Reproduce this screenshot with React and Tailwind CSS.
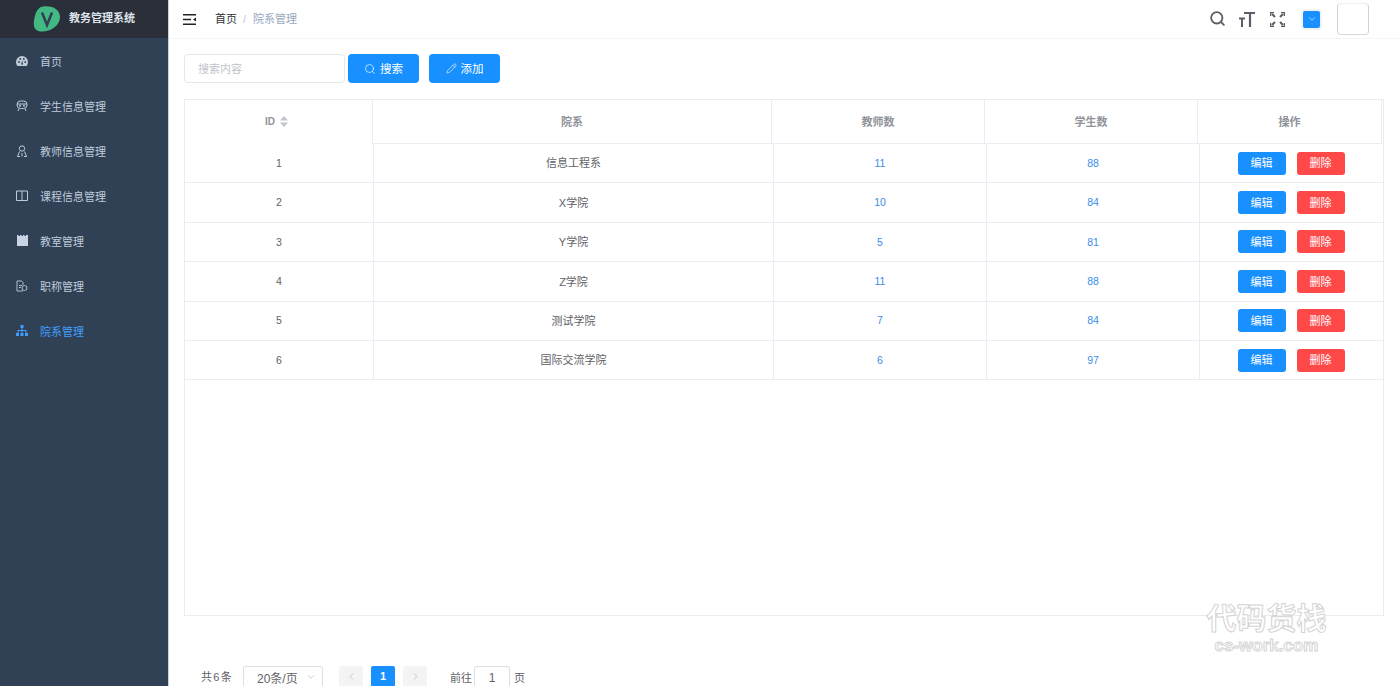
import React from 'react';
import { Search, Pencil, ChevronDown, ChevronLeft, ChevronRight } from 'lucide-react';

const FONT = 'font-["Liberation_Sans","Noto_Sans_CJK_SC",sans-serif]';

const GaugeIcon = () => (
  <svg width="12" height="10" viewBox="0 0 12 10" fill="currentColor">
    <path d="M6 0a6 6 0 0 0-6 6c0 1.500.5 2.800 1.300 4h9.400A6.700 6.700 0 0 0 12 6a6 6 0 0 0-6-6z" />
    <circle cx="3" cy="6" r=".9" fill="#304156" />
    <circle cx="4.200" cy="3" r=".9" fill="#304156" />
    <circle cx="7.800" cy="3" r=".9" fill="#304156" />
    <circle cx="9.300" cy="6" r=".9" fill="#304156" />
    <path d="M5 8.500 6.300 4.500 7 8.500z" fill="#304156" />
  </svg>
);

const StudentIcon = () => (
  <svg width="12" height="12" viewBox="0 0 12 12" fill="none" stroke="currentColor" strokeWidth="1">
    <rect x="1" y="1" width="10" height="7.500" rx="3.500" />
    <path d="M1 4h10" />
    <circle cx="4" cy="5.800" r=".6" fill="currentColor" />
    <circle cx="8" cy="5.800" r=".6" fill="currentColor" />
    <path d="M3 8.500 2 11M9 8.500l1 2.500" />
  </svg>
);

const TeacherIcon = () => (
  <svg width="12" height="12" viewBox="0 0 12 12" fill="none" stroke="currentColor" strokeWidth="1">
    <circle cx="6" cy="3.500" r="2.700" />
    <path d="M3.500 6.500 1.500 11.500h2.500M8.500 6.500l2 5H8M6 8v3.500" />
  </svg>
);

const BookIcon = () => (
  <svg width="12" height="12" viewBox="0 0 12 12" fill="none" stroke="currentColor" strokeWidth="1">
    <path d="M.5 1h11v9.500H.5zM6 1v9.500" />
  </svg>
);

const RoomIcon = () => (
  <svg width="11" height="11" viewBox="0 0 11 11" fill="#c8d4e3">
    <path d="M0 0h1.500v1H3V0h1.500v1H6V0h1.500v1H9V0h2v11H0z" />
  </svg>
);

const TitleIcon = () => (
  <svg width="12" height="12" viewBox="0 0 12 12" fill="none" stroke="currentColor" strokeWidth="0.9">
    <path d="M7 11H1V1h4.500L7 2.500V5" />
    <path d="M3 5.500h3M3 7.500h2" />
    <circle cx="8.500" cy="8" r="2.500" />
  </svg>
);

const TreeIcon = () => (
  <svg width="12" height="11" viewBox="0 0 12 11" fill="currentColor">
    <path d="M4.500 0h3v3h-3zM0 8h3v3H0zM4.500 8h3v3h-3zM9 8h3v3H9z" />
    <path d="M5.500 3h1v2h4v3h-1V6h-3v2h-1V6h-3v2h-1V5h4z" />
  </svg>
);

const MENU = [
  { label: '首页', icon: <GaugeIcon /> },
  { label: '学生信息管理', icon: <StudentIcon /> },
  { label: '教师信息管理', icon: <TeacherIcon /> },
  { label: '课程信息管理', icon: <BookIcon /> },
  { label: '教室管理', icon: <RoomIcon /> },
  { label: '职称管理', icon: <TitleIcon /> },
  { label: '院系管理', icon: <TreeIcon />, active: true },
];

const ROWS = [
  { id: 1, name: '信息工程系', teachers: 11, students: 88 },
  { id: 2, name: 'X学院', teachers: 10, students: 84 },
  { id: 3, name: 'Y学院', teachers: 5, students: 81 },
  { id: 4, name: 'Z学院', teachers: 11, students: 88 },
  { id: 5, name: '测试学院', teachers: 7, students: 84 },
  { id: 6, name: '国际交流学院', teachers: 6, students: 97 },
];

function Sidebar() {
  return (
    <aside className="w-[169px] shrink-0 h-full bg-[#304156] border-r border-[#c9cfd8]">
      <div className="h-[38px] bg-[#2b2f3a] flex items-center pl-[33px]">
        <svg width="28" height="26" viewBox="0 0 28 26" className="shrink-0">
          <path d="M10 0.500C17 -0.500 27 2 27 11c0 8-8 14-17 14.500C3 26 0 22 1 15 2 8 4 1.500 10 .5z" fill="#42b983" />
          <path d="M9 6.500 14 19l5-12.500" fill="none" stroke="#304156" strokeWidth="2.600" />
        </svg>
        <span className="ml-2 pb-[2px] text-[11px] font-bold text-[#dfe4ea]">教务管理系统</span>
      </div>
      <nav className="pt-[1px]">
        {MENU.map((m) => (
          <div key={m.label} className={`h-[45px] flex items-center pl-4 text-[11px] ${m.active ? 'text-[#409eff]' : 'text-[#bfcbd9]'}`}>
            <span className="w-3 h-3 flex items-center justify-center -translate-y-[1px]">{m.icon}</span>
            <span className="ml-3 pt-[1px]">{m.label}</span>
          </div>
        ))}
      </nav>
    </aside>
  );
}

function Topbar() {
  return (
    <header className="h-[39px] shrink-0 flex items-center border-b border-[#f3f5f7] pl-[14px]">
      <svg width="13" height="11" viewBox="0 0 13 11" fill="#222">
        <path d="M0 0h13v1.600H0zM0 4.700h8v1.600H0zM0 9.400h13V11H0zM13 3.500v4l-3-2z" />
      </svg>
      <span className="ml-[19px] text-[11px] text-[#303133]">首页</span>
      <span className="ml-[6px] mr-[7px] text-[11px] text-[#c0c4cc]">/</span>
      <span className="text-[11px] text-[#97a8be]">院系管理</span>
      <div className="ml-auto flex items-center pr-[31px]">
        <Search size={17} strokeWidth={2.600} className="text-[#5a5e66] -translate-y-[1px] -translate-x-[1px]" />
        <svg width="16" height="15" viewBox="0 0 16 15" fill="none" stroke="#5a5e66" strokeWidth="2.200" className="ml-[12px]">
          <path d="M5 1h11M11 1v14" />
          <path d="M0 6.500h6M3 6.500V15" strokeWidth="2" />
        </svg>
        <svg width="15" height="15" viewBox="0 0 15 15" fill="none" stroke="#5a5e66" strokeWidth="2" className="ml-[15px]">
          <path d="M2 2l3 3M13 2l-3 3M2 13l3-3M13 13l-3-3" />
          <path d="M0.500 4V0.500H4M11 .5h3.500V4M.5 11v3.500H4M14.500 11v3.500H11" strokeWidth="1.500" />
        </svg>
        <div className="ml-[18px] w-[17px] h-[17px] bg-[#1890ff] rounded-[2px] shadow-[0_0_0_2px_#f0f2f5] flex items-center justify-center">
          <ChevronDown size={10} className="text-[#cfe6ff]" />
        </div>
        <div className="ml-[17px] w-[32px] h-[32px] rounded-[4px] border border-x-[#d2d2d2] border-b-[#d9d9d9] border-t-[#eeeeee]" />
      </div>
    </header>
  );
}

function Toolbar() {
  return (
    <div className="flex items-center h-[29px]">
      <div className="w-[161px] h-full border border-[#e4e7ed] rounded-[4px] flex items-center pl-[13px] pt-[2px] text-[11px] text-[#c0c4cc]">搜索内容</div>
      <button className="ml-[3px] w-[71px] h-full rounded-[4px] bg-[#1890ff] text-white text-[11.500px] flex items-center justify-center gap-[4px] pt-[2px]">
        <Search size={12} strokeWidth={1.300} className="-translate-y-[1px]" />搜索
      </button>
      <button className="ml-[10px] w-[71px] h-full rounded-[4px] bg-[#1890ff] text-white text-[11.500px] flex items-center justify-center gap-[4px] pt-[2px]">
        <Pencil size={11} strokeWidth={1.300} className="-translate-y-[1px]" />添加
      </button>
    </div>
  );
}

function DeptTable() {
  return (
    <div className="mt-4 h-[517px] w-[1200px] border border-[#e8ecf3] text-[11px]">
      <div className="grid grid-cols-[187px_399px_213px_213px_185px] h-[44px] text-[#909399] font-bold">
        <div className="flex items-center justify-center gap-[5px] pr-[4px] -translate-y-[1px]">
          <span className="text-[10px]">ID</span>
          <svg width="8" height="11" viewBox="0 0 8 11" fill="#c0c4cc"><path d="M4 0l4 4.500H0zM4 11 0 6.500h8z" /></svg>
        </div>
        {['院系', '教师数', '学生数', '操作'].map((h) => (
          <div key={h} className="flex items-center justify-center pt-[2px] border-l border-b border-[#e8ecf3] last:border-r">{h}</div>
        ))}
      </div>
      {ROWS.map((r) => (
        <div key={r.id} className="grid grid-cols-[188px_400px_213px_213px_184px] h-[39.400px] border-b border-[#e8ecf3] text-[#606266]">
          <div className="flex items-center justify-center pt-[1px] text-[10.500px]">{r.id}</div>
          <div className="flex items-center justify-center pt-[1px] border-l border-[#e8ecf3]">{r.name}</div>
          <div className="flex items-center justify-center pt-[1px] border-l border-[#e8ecf3] text-[10.500px] text-[#3a8ee6]">{r.teachers}</div>
          <div className="flex items-center justify-center pt-[1px] border-l border-[#e8ecf3] text-[10.500px] text-[#3a8ee6]">{r.students}</div>
          <div className="flex items-center justify-center gap-[11px] pr-[1px] border-l border-[#e8ecf3]">
            <button className="w-[48px] h-[23px] rounded-[3px] bg-[#1890ff] text-white text-[11px] pt-[1px]">编辑</button>
            <button className="w-[48px] h-[23px] rounded-[3px] bg-[#ff4949] text-white text-[11px] pt-[1px]">删除</button>
          </div>
        </div>
      ))}
    </div>
  );
}

function Pager() {
  return (
    <div className="mt-[50px] h-[20px] flex items-start pl-[17px] text-[11px] text-[#606266]">
      <span className="w-[30px] h-[22px] flex items-center whitespace-nowrap tracking-[-0.9px]">共 6 条</span>
      <div className="ml-3 w-[80px] h-[20px] border border-b-0 border-[#dcdfe6] rounded-t-[3px] flex items-center pl-[13px] pr-[6px] pt-[4px] text-[12px] leading-none">
        20条/页
        <ChevronDown size={10} className="ml-auto text-[#c0c4cc] -translate-y-[2px]" />
      </div>
      <div className="ml-4 w-6 h-[20px] bg-[#f4f4f5] rounded-t-[2px] flex items-center justify-center text-[#c0c4cc]"><ChevronLeft size={11} /></div>
      <div className="ml-2 w-6 h-[20px] bg-[#1890ff] rounded-t-[2px] flex items-center justify-center text-white font-bold text-[11px]">1</div>
      <div className="ml-2 w-6 h-[20px] bg-[#f4f4f5] rounded-t-[2px] flex items-center justify-center text-[#c0c4cc]"><ChevronRight size={11} /></div>
      <span className="ml-[23px] h-[24px] flex items-center">前往</span>
      <div className="ml-[2px] w-[36px] h-[20px] border border-b-0 border-[#dcdfe6] rounded-t-[3px] flex items-center justify-center pt-[3px] text-[12px] leading-none">1</div>
      <span className="ml-[4px] h-[24px] flex items-center">页</span>
    </div>
  );
}

export default function App() {
  return (
    <div className={`relative flex h-[686px] w-[1400px] overflow-hidden bg-white ${FONT}`}>
      <Sidebar />
      <div className="flex-1 min-w-0 flex flex-col">
        <Topbar />
        <main className="pl-[15px] pt-[15px]">
          <Toolbar />
          <DeptTable />
          <Pager />
        </main>
      </div>
      {/* site watermark */}
      <div className="absolute left-[1204px] top-[600px] w-[125px] flex flex-col items-center text-white pointer-events-none">
        <span className="text-[30px] leading-[38px] font-bold whitespace-nowrap [-webkit-text-stroke:1px_#d4d4d4]">代码货栈</span>
        <span className="text-[17px] leading-[15px] font-bold whitespace-nowrap [-webkit-text-stroke:1px_#d4d4d4]">cs-work.com</span>
      </div>
    </div>
  );
}
